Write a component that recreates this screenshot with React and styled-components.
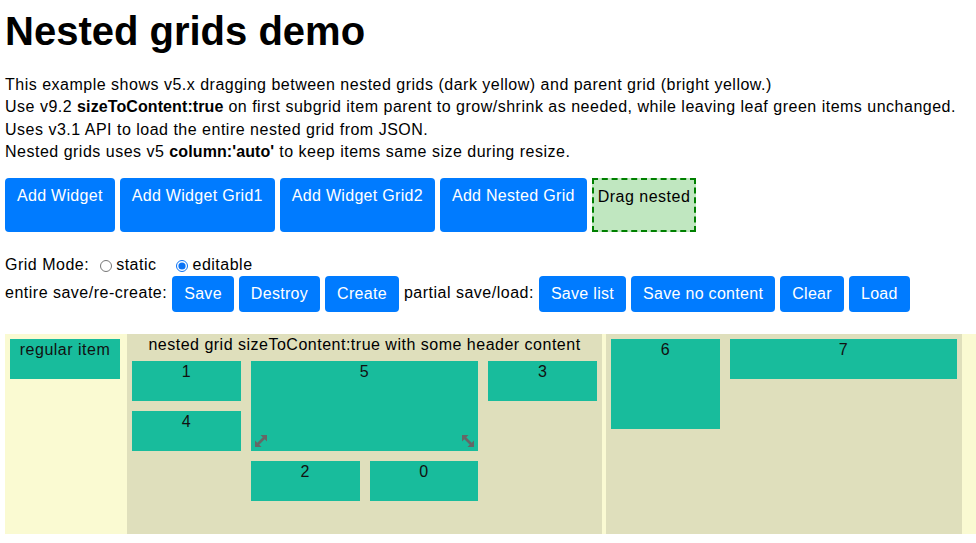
import React from 'react';
import styled, { createGlobalStyle } from 'styled-components';

const GlobalStyle = createGlobalStyle`
   html, body {
      margin: 0;
      padding: 0;
      background: #fff;
   }

   body {
      padding: 0 0 0 5px;
      font-family: 'Liberation Sans', Arial, sans-serif;
      font-size: 16px;
      line-height: 22.4px;
      letter-spacing: 0.5px;
      color: #000;
      overflow: hidden;
   }
`;

const topButtons = ['Add Widget', 'Add Widget Grid1', 'Add Widget Grid2', 'Add Nested Grid'];

const subGrid1 = [
   { id: '1', x: 1, y: 1, w: 1, h: 1 },
   { id: '5', x: 2, y: 1, w: 2, h: 2, handles: true },
   { id: '3', x: 4, y: 1, w: 1, h: 1 },
   { id: '4', x: 1, y: 2, w: 1, h: 1 },
   { id: '2', x: 2, y: 3, w: 1, h: 1 },
   { id: '0', x: 3, y: 3, w: 1, h: 1 },
];

const subGrid2 = [
   { id: '6', x: 1, y: 1, w: 1, h: 2 },
   { id: '7', x: 2, y: 1, w: 2, h: 1 },
];

const ResizeArrow = ({ flip }) => (
   <svg width='12' height='12' viewBox='0 0 12 12'>
      <g transform={flip ? 'translate(12 0) scale(-1 1)' : undefined} fill='#666' stroke='#666'>
         <line x1='3' y1='9' x2='9' y2='3' strokeWidth='2.6' />
         <polygon points='0,12 0,5.5 6.5,12' stroke='none' />
         <polygon points='12,0 5.5,0 12,6.5' stroke='none' />
      </g>
   </svg>
);

const GridCell = ({ item }) => (
   <Cell $x={item.x} $y={item.y} $w={item.w} $h={item.h}>
      <Item>
         {item.id}
         {item.handles && (
            <>
               <Handle $side='left'>
                  <ResizeArrow />
               </Handle>
               <Handle $side='right'>
                  <ResizeArrow flip />
               </Handle>
            </>
         )}
      </Item>
   </Cell>
);

export default function App() {
   return (
      <>
         <GlobalStyle />
         <Title>Nested grids demo</Title>
         <Intro>
            This example shows v5.x dragging between nested grids (dark yellow) and parent grid (bright yellow.)
            <br />
            Use v9.2 <b>sizeToContent:true</b> on first subgrid item parent to grow/shrink as needed, while leaving leaf green items unchanged.
            <br />
            Uses v3.1 API to load the entire nested grid from JSON.
            <br />
            Nested grids uses v5 <b>column:'auto'</b> to keep items same size during resize.
         </Intro>

         <ActionRow>
            {topButtons.map((label) => (
               <Button key={label} $tall>
                  {label}
               </Button>
            ))}
            <DragItem>Drag nested</DragItem>
         </ActionRow>

         <ModeRow>
            Grid Mode:
            <RadioLabel>
               <Radio type='radio' name='mode' />
               static
            </RadioLabel>
            <RadioLabel>
               <Radio type='radio' name='mode' defaultChecked />
               editable
            </RadioLabel>
         </ModeRow>

         <SaveRow>
            entire save/re-create:
            <Button>Save</Button>
            <Button>Destroy</Button>
            <Button>Create</Button>
            <span>partial save/load:</span>
            <Button>Save list</Button>
            <Button>Save no content</Button>
            <Button>Clear</Button>
            <Button>Load</Button>
         </SaveRow>

         <MainGrid>
            <RegularCell>
               <Item>regular item</Item>
            </RegularCell>

            <NestedGrid>
               <NestedHeader>nested grid sizeToContent:true with some header content</NestedHeader>
               <SubGrid $cols={4}>
                  {subGrid1.map((item) => (
                     <GridCell key={item.id} item={item} />
                  ))}
               </SubGrid>
            </NestedGrid>

            <NestedGrid $inset>
               <SubGrid $cols={3}>
                  {subGrid2.map((item) => (
                     <GridCell key={item.id} item={item} />
                  ))}
               </SubGrid>
            </NestedGrid>
         </MainGrid>
      </>
   );
}

const Title = styled.h1`
   font-size: 40px;
   line-height: 48px;
   font-weight: 700;
   letter-spacing: 0;
   margin: 7px 0 19px;
`;

const Intro = styled.p`
   margin: 0 0 14px;
   line-height: 22.4px;

   b {
      font-weight: 700;
      letter-spacing: 0.1px;
   }
`;

const ActionRow = styled.div`
   display: flex;
   align-items: stretch;
   gap: 5px;
   margin-bottom: 24px;
`;

const Button = styled.button`
   font-family: inherit;
   font-size: 16px;
   line-height: 24px;
   letter-spacing: 0.3px;
   color: #fff;
   background: #007bff;
   border: none;
   border-radius: 4px;
   padding: 6px 12px;
   cursor: pointer;
   ${({ $tall }) => $tall && `
      display: flex;
      align-items: flex-start;
   `}
`;

const DragItem = styled.div`
   width: 104px;
   height: 54px;
   box-sizing: border-box;
   border: 2px dashed green;
   background: #c0e7c0;
   padding: 6px 4px;
   line-height: 22px;
   white-space: nowrap;
`;

const ModeRow = styled.div`
   display: flex;
   align-items: center;
   height: 20px;
`;

const RadioLabel = styled.label`
   display: inline-flex;
   align-items: center;
   margin-left: 11px;

   & + & {
      margin-left: 20px;
   }
`;

const Radio = styled.input`
   width: 12px;
   height: 12px;
   margin: 0 4px 0 0;
   accent-color: #0a72f5;
`;

const SaveRow = styled.div`
   display: flex;
   align-items: center;
   gap: 5px;
   margin-bottom: 22px;
`;

const MainGrid = styled.div`
   display: grid;
   grid-template-columns: 122px 475px 360px 1fr;
   height: 200px;
   background: #fafad2;
   margin-right: -10px;
`;

const RegularCell = styled.div`
   padding: 5px;
`;

const Item = styled.div`
   position: relative;
   height: 100%;
   box-sizing: border-box;
   background: #18bc9c;
   color: #111;
   text-align: center;
   line-height: 22px;

   ${RegularCell} & {
      width: 110px;
      height: 40px;
   }
`;

const NestedGrid = styled.div`
   background: #dfdfbc;
   display: flex;
   flex-direction: column;
   margin-left: ${({ $inset }) => ($inset ? '4px' : '0')};
`;

const NestedHeader = styled.div`
   text-align: center;
   line-height: 22px;
`;

const SubGrid = styled.div`
   display: grid;
   grid-template-columns: repeat(${({ $cols }) => $cols}, 1fr);
   grid-auto-rows: 50px;
`;

const Cell = styled.div`
   grid-column: ${({ $x, $w }) => `${$x} / span ${$w}`};
   grid-row: ${({ $y, $h }) => `${$y} / span ${$h}`};
   padding: 5px;
`;

const Handle = styled.span`
   position: absolute;
   bottom: 4px;
   ${({ $side }) => ($side === 'left' ? 'left: 4px;' : 'right: 4px;')}
   width: 12px;
   height: 12px;
   display: flex;
`;
